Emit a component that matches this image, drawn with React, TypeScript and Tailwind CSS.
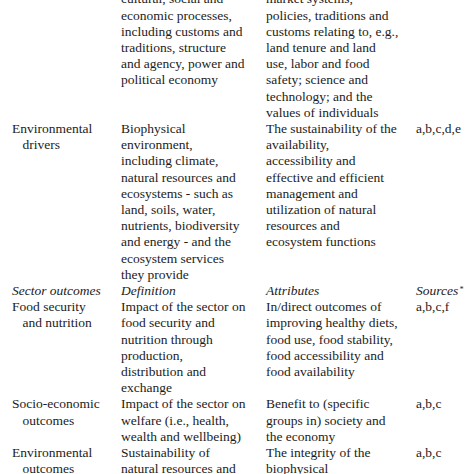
type Row = {
  c1: string[];
  c2: string[];
  c3: string[];
  c4: string;
  head?: boolean;
};

const rows: Row[] = [
  {
    c1: [],
    c2: [
      'cultural, social and',
      'economic processes,',
      'including customs and',
      'traditions, structure',
      'and agency, power and',
      'political economy',
    ],
    c3: [
      'market systems,',
      'policies, traditions and',
      'customs relating to, e.g.,',
      'land tenure and land',
      'use, labor and food',
      'safety; science and',
      'technology; and the',
      'values of individuals',
    ],
    c4: '',
  },
  {
    c1: ['Environmental', 'drivers'],
    c2: [
      'Biophysical',
      'environment,',
      'including climate,',
      'natural resources and',
      'ecosystems - such as',
      'land, soils, water,',
      'nutrients, biodiversity',
      'and energy - and the',
      'ecosystem services',
      'they provide',
    ],
    c3: [
      'The sustainability of the',
      'availability,',
      'accessibility and',
      'effective and efficient',
      'management and',
      'utilization of natural',
      'resources and',
      'ecosystem functions',
    ],
    c4: 'a,b,c,d,e',
  },
  {
    c1: ['Sector outcomes'],
    c2: ['Definition'],
    c3: ['Attributes'],
    c4: 'Sources',
    head: true,
  },
  {
    c1: ['Food security', 'and nutrition'],
    c2: [
      'Impact of the sector on',
      'food security and',
      'nutrition through',
      'production,',
      'distribution and',
      'exchange',
    ],
    c3: [
      'In/direct outcomes of',
      'improving healthy diets,',
      'food use, food stability,',
      'food accessibility and',
      'food availability',
    ],
    c4: 'a,b,c,f',
  },
  {
    c1: ['Socio-economic', 'outcomes'],
    c2: ['Impact of the sector on', 'welfare (i.e., health,', 'wealth and wellbeing)'],
    c3: ['Benefit to (specific', 'groups in) society and', 'the economy'],
    c4: 'a,b,c',
  },
  {
    c1: ['Environmental', 'outcomes'],
    c2: ['Sustainability of', 'natural resources and'],
    c3: ['The integrity of the', 'biophysical'],
    c4: 'a,b,c',
  },
];

function Lines({ lines, hang }: { lines: string[]; hang?: boolean }) {
  return (
    <div>
      {lines.map((l, i) => (
        <div key={i} className={`whitespace-nowrap ${hang && i > 0 ? 'pl-[10.5px]' : ''}`}>
          {l}
        </div>
      ))}
    </div>
  );
}

export default function App() {
  return (
    <div className="w-[474px] h-[474px] overflow-hidden bg-white">
      <div
        className="-mt-[8.6px] pl-[12px] text-[13.5px] leading-[16.2px] text-[#1c1c1c]"
        style={{ fontFamily: '"Liberation Serif", "DejaVu Serif", serif' }}
      >
        {rows.map((r, i) => (
          <div key={i} className={`grid grid-cols-[109px_145px_150px_1fr] ${r.head ? 'italic' : ''}`}>
            <Lines lines={r.c1} hang />
            <Lines lines={r.c2} />
            <Lines lines={r.c3} />
            <div className="whitespace-nowrap">
              {r.c4}
              {r.head && <sup className="text-[8px] -top-[3px] ml-[1px]">*</sup>}
            </div>
          </div>
        ))}
      </div>
    </div>
  );
}
